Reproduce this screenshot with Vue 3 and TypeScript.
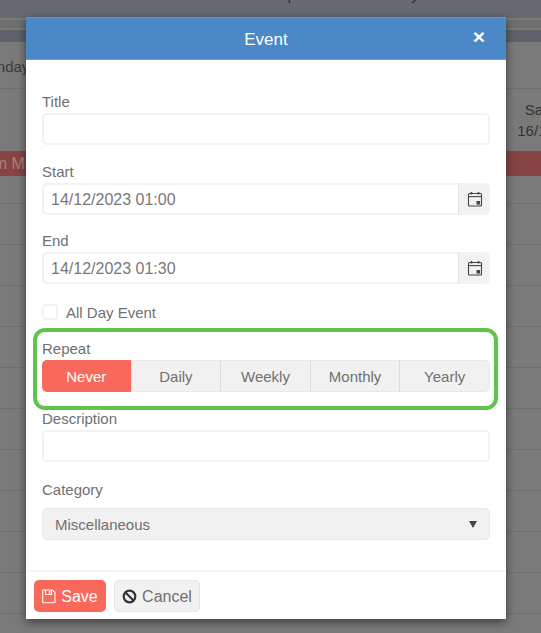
<script setup lang="ts">
const repeatOptions: string[] = ['Never', 'Daily', 'Weekly', 'Monthly', 'Yearly']
const bgRows: number[] = Array.from({ length: 10 }, (_, i) => i)
const bgCols: number[] = Array.from({ length: 6 }, (_, i) => i)
</script>

<template>
  <div class="page">
    <div class="backdrop">
      <div class="bg-top"><span class="bg-hint">Double click / double tap to add new entry</span></div>
      <div class="bg-strip"></div>
      <div class="bg-bar"></div>
      <div class="bg-days">
        <span class="bg-monday">Monday</span>
      </div>
      <div class="bg-dates">
        <span class="bg-sat">Sat<br />16/12</span>
      </div>
      <div class="bg-event"><span>Team Meeting</span></div>
      <div class="bg-slot"></div>
      <div v-for="r in bgRows" :key="r" class="bg-row">
        <i v-for="c in bgCols" :key="c" class="bg-cell"></i>
      </div>
    </div>

    <div class="modal">
      <header class="modal-head">
        <h2>Event</h2>
        <span class="close">×</span>
      </header>
      <form class="modal-body" @submit.prevent>
        <div class="group">
          <label>Title</label>
          <input class="field" type="text" />
        </div>
        <div class="group">
          <label>Start</label>
          <div class="date">
            <input class="field" type="text" value="14/12/2023 01:00" />
            <span class="addon">
              <svg width="16" height="16" viewBox="0 0 16 16" fill="none" stroke="#444" stroke-width="1.1">
                <rect x="1.5" y="2.5" width="13" height="12.5" rx="1" />
                <path d="M1.5 5.6h13" />
                <path d="M4.5 1v2.6M11.5 1v2.6" stroke-width="1.6" />
                <rect x="9.5" y="10" width="3.6" height="3.6" fill="#444" stroke="none" />
              </svg>
            </span>
          </div>
        </div>
        <div class="group">
          <label>End</label>
          <div class="date">
            <input class="field" type="text" value="14/12/2023 01:30" />
            <span class="addon">
              <svg width="16" height="16" viewBox="0 0 16 16" fill="none" stroke="#444" stroke-width="1.1">
                <rect x="1.5" y="2.5" width="13" height="12.5" rx="1" />
                <path d="M1.5 5.6h13" />
                <path d="M4.5 1v2.6M11.5 1v2.6" stroke-width="1.6" />
                <rect x="9.5" y="10" width="3.6" height="3.6" fill="#444" stroke="none" />
              </svg>
            </span>
          </div>
        </div>
        <div class="check-row">
          <span class="check"></span>
          <span>All Day Event</span>
        </div>
        <div class="group">
          <label>Repeat</label>
          <div class="segments">
            <button
              v-for="(opt, i) in repeatOptions"
              :key="opt"
              type="button"
              class="segment"
              :class="{ active: i === 0 }"
            >{{ opt }}</button>
          </div>
        </div>
        <div class="group">
          <label>Description</label>
          <input class="field" type="text" />
        </div>
        <div class="group category">
          <label>Category</label>
          <div class="select">
            <span>Miscellaneous</span>
            <i class="caret"></i>
          </div>
        </div>
      </form>
      <footer class="modal-foot">
        <button type="button" class="btn save">
          <svg width="14" height="15" viewBox="0 0 14 15" fill="none" stroke="#fff" stroke-width="1.1">
            <path d="M1.5 1h9l2.5 2.5V13a.8.8 0 0 1-.8.8H1.5a.8.8 0 0 1-.8-.8V1.8A.8.8 0 0 1 1.5 1z" />
            <path d="M3.5 1v4.5h6V1" />
            <rect x="6.8" y="2" width="1.6" height="2.6" fill="#fff" stroke="none" />
          </svg>
          Save
        </button>
        <button type="button" class="btn cancel">
          <svg width="15" height="15" viewBox="0 0 15 15" fill="none" stroke="#333" stroke-width="2.2">
            <circle cx="7.5" cy="7.5" r="5.8" />
            <path d="M3.5 3.5l8 8" />
          </svg>
          Cancel
        </button>
      </footer>
      <div class="highlight"></div>
    </div>
  </div>
</template>

<style>
html,
body {
  margin: 0;
  background: #7a7a7a;
}
</style>

<style scoped>
.page {
  position: relative;
  width: 541px;
  height: 633px;
  overflow: hidden;
  font-family: "Liberation Sans", Arial, sans-serif;
  color: #707070;
}
.backdrop {
  display: flex;
  flex-direction: column;
  height: 633px;
  overflow: hidden;
  background: #7a7a7a;
  color: #333;
}
.bg-top {
  height: 18px;
  background: #686a70;
  text-align: center;
  overflow: hidden;
  flex: none;
}
.bg-hint {
  display: block;
  margin-top: -14px;
  font-size: 16px;
  line-height: 18px;
  color: #2c2e36;
}
.bg-strip {
  flex: none;
  height: 12px;
  box-sizing: border-box;
  background: #6d6e6e;
  border-top: 2px solid #797a78;
  border-bottom: 2px solid #797a78;
}
.bg-bar {
  flex: none;
  height: 12px;
  background: #5f626a;
}
.bg-days {
  flex: none;
  height: 46px;
  border-bottom: 1px solid #6e6e6e;
  font-size: 15px;
  line-height: 34px;
}
.bg-monday {
  margin-left: -24px;
  display: block;
  height: 100%;
  padding-top: 8px;
  color: #3a3a3a;
  box-sizing: border-box;
}
.bg-dates {
  flex: none;
  height: 62px;
}
.bg-sat {
  display: block;
  margin-left: 506px;
  width: 60px;
  padding-top: 10px;
  font-size: 15px;
  line-height: 21px;
  text-align: center;
  color: #333;
}
.bg-event {
  flex: none;
  height: 25px;
  background: #864543;
  color: #ab7f7d;
  font-size: 16px;
  line-height: 26px;
  overflow: hidden;
  white-space: nowrap;
}
.bg-event span {
  margin-left: -32px;
  display: block;
}
.bg-slot {
  flex: none;
  height: 27px;
  border-bottom: 1px solid #6e6e6e;
}
.bg-row {
  flex: none;
  display: flex;
  height: 40px;
  border-bottom: 1px solid #6e6e6e;
  margin-left: -87px;
}
.bg-cell {
  flex: none;
  width: 113px;
  border-right: 1px solid #6e6e6e;
}
.modal {
  position: absolute;
  left: 26px;
  top: 17px;
  width: 480px;
  height: 602px;
  display: flex;
  flex-direction: column;
  background: #fff;
  box-shadow: 0 3px 9px rgba(0, 0, 0, 0.5);
}
.modal-head {
  flex: none;
  height: 43px;
  box-sizing: border-box;
  display: flex;
  align-items: center;
  justify-content: center;
  position: relative;
  padding-top: 2px;
  background: #4b88c7;
  border-top: 1px solid #6b93bf;
  border-bottom: 1px solid #6fa2d6;
  color: #fff;
}
.modal-head h2 {
  margin: 0;
  font-size: 17px;
  font-weight: 400;
}
.close {
  position: absolute;
  right: 21px;
  top: 7px;
  font-size: 21px;
  line-height: 24px;
  font-weight: 700;
}
.modal-body {
  flex: 1;
  box-sizing: border-box;
  padding: 29px 16px 0;
  font-size: 15px;
}
.group {
  margin-bottom: 13.5px;
}
.group label {
  display: block;
  height: 24px;
  line-height: 25px;
}
.field {
  display: block;
  width: 100%;
  height: 32px;
  box-sizing: border-box;
  padding: 2px 7px 0;
  border: 2px solid #f2f2f2;
  border-radius: 5px;
  background: #fff;
  font: inherit;
  font-size: 16px;
  color: #777;
  outline: none;
}
.date {
  display: flex;
}
.date .field {
  flex: 1;
  min-width: 0;
  border-right: 0;
  border-radius: 5px 0 0 5px;
}
.addon {
  flex: none;
  width: 32px;
  height: 32px;
  box-sizing: border-box;
  display: flex;
  align-items: center;
  justify-content: center;
  background: #f2f2f2;
  border-left: 1px solid #e2e2e2;
  border-radius: 0 5px 5px 0;
}
.check-row {
  display: flex;
  align-items: center;
  gap: 8px;
  height: 24px;
  padding-top: 2.5px;
  margin-bottom: 12px;
}
.check {
  width: 16px;
  height: 16px;
  box-sizing: border-box;
  border: 2px solid #f2f2f2;
  border-radius: 4px;
}
.segments {
  display: flex;
  height: 32px;
  border-radius: 5px;
  overflow: hidden;
  background: #f1f1f1;
}
.segment {
  flex: 1;
  min-width: 0;
  padding: 1px 0 0;
  border: 1px solid #e8e8e8;
  border-width: 1px 0;
  border-left: 1px solid #dcdcdc;
  background: #f1f1f1;
  font: inherit;
  color: #707070;
}
.segment:last-child {
  border-right: 1px solid #e8e8e8;
  border-radius: 0 5px 5px 0;
}
.segment.active {
  border: 0;
  background: #f9695b;
  color: #fff;
}
.category {
  margin-top: 15px;
}
.category label {
  margin-bottom: 7px;
}
.select {
  height: 32px;
  box-sizing: border-box;
  display: flex;
  align-items: center;
  justify-content: space-between;
  padding: 1px 12px 0;
  background: #f1f1f1;
  border: 1px solid #e8e8e8;
  border-radius: 5px;
}
.caret {
  width: 0;
  height: 0;
  border-left: 4px solid transparent;
  border-right: 4px solid transparent;
  border-top: 7px solid #444;
}
.modal-foot {
  flex: none;
  height: 49px;
  box-sizing: border-box;
  display: flex;
  align-items: flex-start;
  gap: 8px;
  padding: 8px 8px 0;
  border-top: 2px solid #f4f4f4;
}
.btn {
  height: 32px;
  box-sizing: border-box;
  display: inline-flex;
  align-items: center;
  justify-content: center;
  gap: 5px;
  padding: 1px 0 0;
  border-radius: 5px;
  font: inherit;
  font-size: 16px;
}
.save {
  width: 72px;
  border: 0;
  background: #f9695b;
  color: #fff;
}
.cancel {
  width: 86px;
  border: 1px solid #e4e4e4;
  background: #f1f1f1;
  color: #707070;
}
.highlight {
  position: absolute;
  left: 7px;
  top: 311px;
  width: 465px;
  height: 82px;
  box-sizing: border-box;
  border: 4px solid #5fc44b;
  border-radius: 12px;
  pointer-events: none;
}
</style>
